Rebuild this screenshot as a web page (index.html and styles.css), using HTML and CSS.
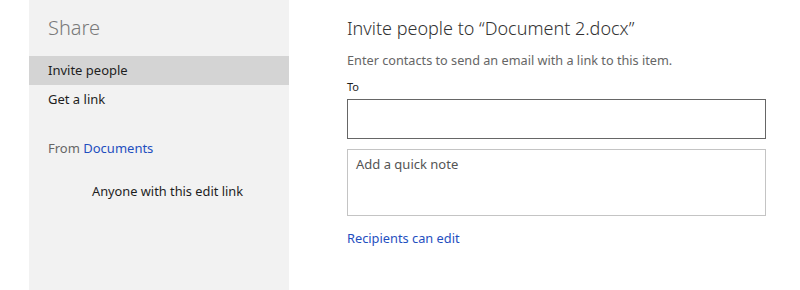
FILE: index.html
```html
<!DOCTYPE html>
<html>
<head>
<meta charset="utf-8">
<link rel="stylesheet" href="styles.css">
</head>
<body>
<div class="page">
  <aside class="sidebar">
    <div class="side-title">Share</div>
    <nav class="nav">
      <div class="nav-item active">Invite people</div>
      <div class="nav-item">Get a link</div>
    </nav>
    <div class="from">From <a class="link" href="#">Documents</a></div>
    <div class="anyone">Anyone with this edit link</div>
  </aside>
  <main class="main">
    <h1 class="heading">Invite people to “Document 2.docx”</h1>
    <p class="sub">Enter contacts to send an email with a link to this item.</p>
    <label class="to-label">To</label>
    <div class="to-box"></div>
    <div class="note-box">Add a quick note</div>
    <a class="link recip" href="#">Recipients can edit</a>
  </main>
</div>
</body>
</html>
```
FILE: styles.css
```css
html, body {
  margin: 0;
  padding: 0;
  background: #ffffff;
}
body {
  font-family: "Noto Sans", "Open Sans", sans-serif;
  color: #222222;
}
.page {
  display: flex;
  padding-left: 29px;
  height: 290px;
}
.sidebar {
  width: 260px;
  background: #f2f2f2;
  padding-top: 14px;
  box-sizing: border-box;
}
.side-title {
  font-size: 20px;
  line-height: 28px;
  color: #7a7a7a;
  padding-left: 19px;
  font-weight: 300;
  margin-bottom: 14px;
}
.nav-item {
  height: 29px;
  line-height: 29px;
  padding-left: 19px;
  font-size: 13px;
  color: #1e1e1e;
}
.nav-item.active {
  background: #d4d4d4;
}
.from {
  margin-top: 24px;
  padding-left: 19px;
  font-size: 13px;
  line-height: 20px;
  color: #666666;
}
.link {
  color: #1f4fbf;
  text-decoration: none;
}
.anyone {
  margin-top: 23px;
  padding-left: 63px;
  font-size: 12.8px;
  line-height: 20px;
  color: #1e1e1e;
}
.main {
  padding-left: 58px;
  padding-top: 14px;
  display: flex;
  flex-direction: column;
  align-items: flex-start;
}
.heading {
  margin: 0;
  font-size: 18px;
  line-height: 28px;
  font-weight: 300;
  color: #333333;
}
.sub {
  margin: 10px 0 0;
  font-size: 12.7px;
  line-height: 16px;
  color: #666666;
}
.to-label {
  margin-top: 11px;
  font-size: 11px;
  line-height: 16px;
  color: #1e1e1e;
}
.to-box {
  margin-top: 4px;
  width: 419px;
  height: 40px;
  box-sizing: border-box;
  border: 1px solid #666666;
}
.note-box {
  margin-top: 10px;
  width: 419px;
  height: 67px;
  box-sizing: border-box;
  border: 1px solid #c4c4c4;
  padding: 6px 8px;
  font-size: 13px;
  line-height: 16px;
  color: #555555;
}
.recip {
  margin-top: 13px;
  font-size: 12.8px;
  line-height: 18px;
}
```
